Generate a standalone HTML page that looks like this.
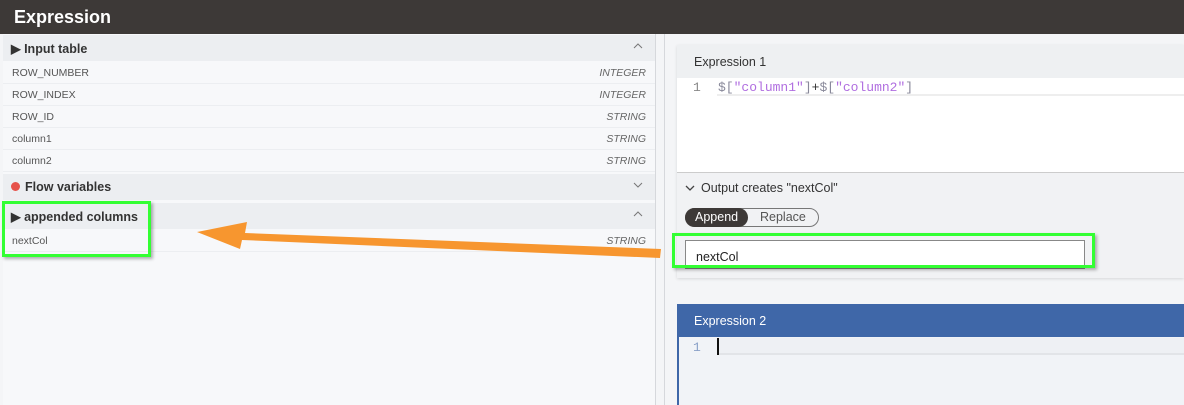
<!DOCTYPE html>
<html><head><style>
*{box-sizing:border-box;margin:0;padding:0}
body{width:1184px;height:405px;overflow:hidden;background:#f4f5f7;font-family:"Liberation Sans",sans-serif;position:relative}
.abs{position:absolute}
.title{left:0;top:0;width:1184px;height:34px;background:#3d3937;color:#fff;font-weight:bold;font-size:18px;padding:7px 0 0 14px}
.left{left:3px;top:34px;width:652px;height:371px;background:#f7f8fa}
.hdr{position:absolute;left:0;width:652px;height:26px;background:#eceef1;font-size:12.5px;font-weight:bold;color:#333;padding:6px 0 0 8px}
.row{position:absolute;left:0;width:652px;height:22px;font-size:10.5px;color:#555;padding:5px 9px 0 9px;border-bottom:1px solid #eceef1}
.row i{float:right;color:#666}
.chev{position:absolute;right:10px;top:6px;width:14px;height:10px}
</style></head><body>
<div class="abs title">Expression</div>
<div class="abs left">
 <div class="hdr" style="top:1px">&#9654; Input table<svg class="chev"><path d="M3 7 L7 3 L11 7" stroke="#777" fill="none"/></svg></div>
 <div class="row" style="top:28px">ROW_NUMBER<i>INTEGER</i></div>
 <div class="row" style="top:50px">ROW_INDEX<i>INTEGER</i></div>
 <div class="row" style="top:72px">ROW_ID<i>STRING</i></div>
 <div class="row" style="top:94px">column1<i>STRING</i></div>
 <div class="row" style="top:116px">column2<i>STRING</i></div>
 <div class="hdr" style="top:140px"><span style="display:inline-block;width:9px;height:9px;border-radius:50%;background:#e6524a;margin-right:5px"></span>Flow variables<svg class="chev"><path d="M3 3 L7 7 L11 3" stroke="#777" fill="none"/></svg></div>
 <div class="hdr" style="top:169px">&#9654; appended columns<svg class="chev"><path d="M3 7 L7 3 L11 7" stroke="#777" fill="none"/></svg></div>
 <div class="row" style="top:196px">nextCol<i>STRING</i></div>
</div>
<div class="abs" style="left:655px;top:34px;width:1px;height:371px;background:#d6d8dc"></div>
<div class="abs" style="left:664px;top:34px;width:1px;height:371px;background:#d6d8dc"></div>
<div class="abs" style="left:677px;top:45px;width:507px;height:233px;background:#f1f2f4;box-shadow:0 1px 3px rgba(0,0,0,.12)"></div>
<div class="abs" style="left:677px;top:45px;width:507px;height:33px;background:#eef0f2;font-size:12.5px;color:#333;padding:10px 0 0 17px">Expression 1</div>
<div class="abs" style="left:677px;top:78px;width:507px;height:95px;background:#fff;border-bottom:1px solid #ccc"></div>
<div class="abs" style="left:717px;top:80px;width:467px;height:16px;background:#fff;border-bottom:2px solid #eee"></div>
<div class="abs" style="left:693px;top:80px;font-family:'Liberation Mono',monospace;font-size:13px;color:#888">1</div>
<div class="abs" style="left:718px;top:80px;font-family:'Liberation Mono',monospace;font-size:13px;color:#b06ee0"><span style="color:#889">$[</span>"column1"<span style="color:#889">]</span><span style="color:#333">+</span><span style="color:#889">$[</span>"column2"<span style="color:#889">]</span></div>
<svg class="abs" style="left:684px;top:183px" width="12" height="10"><path d="M2 3 L6 7 L10 3" stroke="#444" stroke-width="1.3" fill="none"/></svg>
<div class="abs" style="left:701px;top:181px;font-size:12.5px;color:#333">Output creates "nextCol"</div>
<div class="abs" style="left:685px;top:208px;width:134px;height:19px;border:1px solid #777;border-radius:10px;font-size:12px"></div>
<div class="abs" style="left:685px;top:208px;width:63px;height:19px;background:#3d3937;border-radius:10px;color:#fff;font-size:12.5px;padding:2px 0 0 10px">Append</div>
<div class="abs" style="left:760px;top:210px;font-size:12.5px;color:#555">Replace</div>
<div class="abs" style="left:685px;top:240px;width:400px;height:29px;background:#fff;border:1px solid #888;font-size:12.5px;color:#222;padding:9px 0 0 10px">nextCol</div>
<div class="abs" style="left:672px;top:233px;width:423px;height:35px;border:3px solid #3f3;box-shadow:2px 2px 3px rgba(0,0,0,.3)"></div>
<div class="abs" style="left:2px;top:201px;width:149px;height:56px;border:3px solid #3f3;box-shadow:2px 2px 3px rgba(0,0,0,.3)"></div>
<div class="abs" style="left:677px;top:304px;width:507px;height:101px;background:#f1f3f7;border-left:2px solid #3f67a8"></div>
<div class="abs" style="left:677px;top:304px;width:507px;height:33px;background:#3f67a8;color:#fff;font-size:12.5px;padding:10px 0 0 17px">Expression 2</div>
<div class="abs" style="left:717px;top:338px;width:467px;height:17px;background:#eef0f4;border-bottom:2px solid #e2e4e8"></div>
<div class="abs" style="left:717px;top:338px;width:2px;height:17px;background:#111"></div>
<div class="abs" style="left:693px;top:340px;font-family:'Liberation Mono',monospace;font-size:13px;color:#8aa0c8">1</div>
<svg class="abs" style="left:0;top:0" width="1184" height="405">
<polygon points="660,258 661,249 245,233 247,222 197,232 240,249 242,240" fill="#f7962f"/>
</svg>
</body></html>
